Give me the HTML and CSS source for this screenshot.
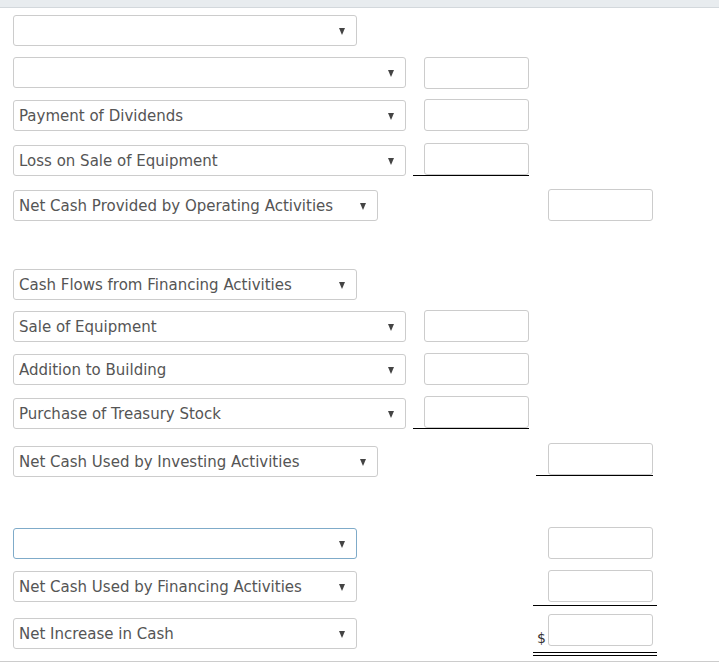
FILE: index.html
```html
<!DOCTYPE html>
<html>
<head>
  <meta charset="UTF-8">
  <title>Cash Flow Statement</title>
  <link rel="stylesheet" href="styles.css">
</head>
<body>

  <div class="top-band"></div>

  <div class="sheet">
    <!-- Operating section -->
    <div class="row">
      <div class="pick short"><span class="pick-text"></span><span class="arrow"></span></div>
    </div>
    <div class="row gap-10">
      <div class="pick long"><span class="pick-text"></span><span class="arrow"></span></div>
      <div class="col-b"><div class="amount"></div></div>
    </div>
    <div class="row gap-10">
      <div class="pick long drop-1"><span class="pick-text">Payment of Dividends</span><span class="arrow"></span></div>
      <div class="col-b"><div class="amount"></div></div>
    </div>
    <div class="row gap-12">
      <div class="pick long drop-2"><span class="pick-text">Loss on Sale of Equipment</span><span class="arrow"></span></div>
      <div class="col-b line"><div class="amount"></div></div>
    </div>
    <div class="row gap-14">
      <div class="pick mid drop-1"><span class="pick-text">Net Cash Provided by Operating Activities</span><span class="arrow"></span></div>
      <div class="col-c plain"><div class="amount"></div></div>
    </div>

    <!-- Investing section -->
    <div class="row gap-48">
      <div class="pick short"><span class="pick-text">Cash Flows from Financing Activities</span><span class="arrow"></span></div>
    </div>
    <div class="row gap-9">
      <div class="pick long drop-1"><span class="pick-text">Sale of Equipment</span><span class="arrow"></span></div>
      <div class="col-b"><div class="amount"></div></div>
    </div>
    <div class="row gap-11">
      <div class="pick long drop-1"><span class="pick-text">Addition to Building</span><span class="arrow"></span></div>
      <div class="col-b"><div class="amount"></div></div>
    </div>
    <div class="row gap-11">
      <div class="pick long drop-2"><span class="pick-text">Purchase of Treasury Stock</span><span class="arrow"></span></div>
      <div class="col-b line"><div class="amount"></div></div>
    </div>
    <div class="row gap-15">
      <div class="pick mid drop-3"><span class="pick-text">Net Cash Used by Investing Activities</span><span class="arrow"></span></div>
      <div class="col-c line-a"><div class="amount"></div></div>
    </div>

    <!-- Financing section -->
    <div class="row gap-52">
      <div class="pick short focus drop-1"><span class="pick-text"></span><span class="arrow"></span></div>
      <div class="col-c plain"><div class="amount"></div></div>
    </div>
    <div class="row gap-11">
      <div class="pick short drop-1"><span class="pick-text">Net Cash Used by Financing Activities</span><span class="arrow"></span></div>
      <div class="col-c line-b"><div class="amount"></div></div>
    </div>
    <div class="row gap-12">
      <div class="pick short drop-4"><span class="pick-text">Net Increase in Cash</span><span class="arrow"></span></div>
      <div class="col-c total"><span class="dollar">$</span><div class="amount"></div></div>
    </div>
  </div>

  <div class="bottom-rule"></div>

</body>
</html>
```

FILE: styles.css
```css
body {
  margin: 0;
  padding: 0;
  background-color: #FFFFFF;
  font-family: "DejaVu Sans", Verdana, sans-serif;
}
/* Strip at the very top */
.top-band {
  height: 7px;
  background-color: #E8ECEF;
  border-bottom: 1px solid #D3D8DC;
}
.sheet {
  padding: 7px 0 0 13px;
  height: 653px;
  box-sizing: border-box;
}
.row {
  display: grid;
  grid-template-columns: 400px 116px 128px;
  align-items: start;
  height: 32px;
}
.gap-9  { margin-top: 9px; }
.gap-10 { margin-top: 10px; }
.gap-11 { margin-top: 11px; }
.gap-12 { margin-top: 12px; }
.gap-14 { margin-top: 14px; }
.gap-15 { margin-top: 15px; }
.gap-48 { margin-top: 48px; }
.gap-52 { margin-top: 52px; }
/* Dropdowns */
.pick {
  grid-column: 1;
  display: flex;
  align-items: center;
  height: 31px;
  box-sizing: border-box;
  border: 1px solid #CCCCCC;
  border-radius: 3px;
  padding: 0 11px 0 5px;
  color: #555555;
  font-size: 15px;
  background-color: #FFFFFF;
}
.pick.short { width: 344px; }
.pick.long  { width: 393px; }
.pick.mid   { width: 365px; }
.pick.focus { border-color: #7FABC9; }
.drop-1 { margin-top: 1px; }
.drop-2 { margin-top: 2px; }
.drop-3 { margin-top: 3px; }
.drop-4 { margin-top: 4px; }
.pick-text {
  flex: 1;
  white-space: nowrap;
  overflow: hidden;
}
.arrow {
  width: 0;
  height: 0;
  border-left: 3.5px solid transparent;
  border-right: 3.5px solid transparent;
  border-top: 7px solid #444444;
  margin-top: 1px;
}
/* Amount boxes */
.amount {
  width: 105px;
  height: 32px;
  box-sizing: border-box;
  border: 1px solid #CCCCCC;
  border-radius: 3px;
  background-color: #FFFFFF;
}
.col-b {
  grid-column: 2;
  padding-left: 11px;
}
.col-b.line {
  border-bottom: 1px solid #000000;
}
.col-c {
  grid-column: 3;
  display: flex;
  align-items: flex-end;
}
.col-c.plain {
  margin-left: 19px;
}
.col-c.line-a {
  margin-left: 7px;
  padding-left: 12px;
  width: 105px;
  border-bottom: 1px solid #000000;
}
.col-c.line-b {
  margin-left: 4px;
  padding: 0 4px 3px 15px;
  border-bottom: 1px solid #000000;
}
.col-c.total {
  margin-left: 4px;
  padding: 0 4px 6px 4px;
  border-bottom: 4px double #000000;
}
.dollar {
  width: 11px;
  font-size: 14px;
  color: #333333;
  line-height: 14px;
  margin-bottom: 1px;
}
.bottom-rule {
  border-top: 1px solid #CCCCCC;
}
```
